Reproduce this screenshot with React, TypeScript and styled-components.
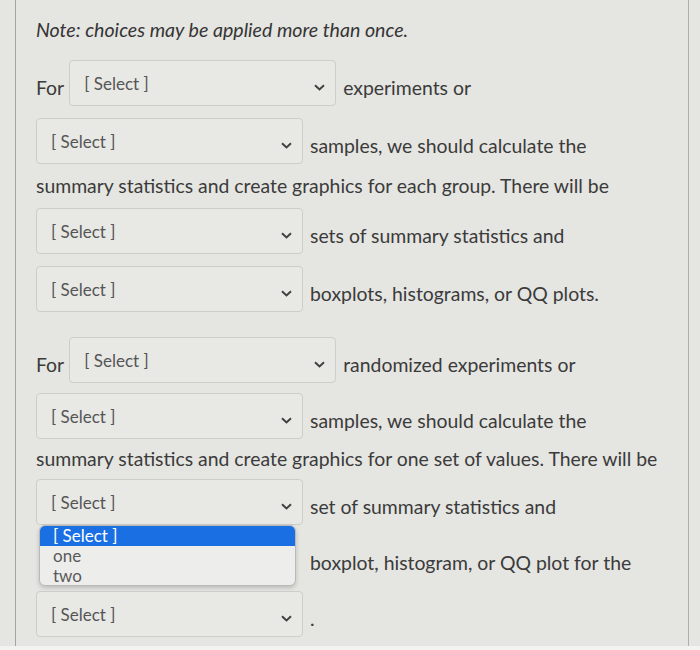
import React from "react";
import styled, {createGlobalStyle} from "styled-components";

const GlobalStyle = createGlobalStyle`
  html, body {
    margin: 0;
    padding: 0;
    background: #f3f3f1;
  }
  body {
    font-family: Lato, "Liberation Sans", sans-serif;
  }
`;

const Page = styled.div`
  width: 700px;
  height: 646px;
  box-sizing: border-box;
  padding: 0 11px 0 15px;
  background: #e5e5e2;
`;

const Panel = styled.div`
  height: 100%;
  box-sizing: border-box;
  padding: 19px 0 0 20px;
  border-left: 1px solid #a4a5a2;
  border-right: 1px solid #aeb0ad;
`;

const Note = styled.div`
  font-size: 19.6px;
  line-height: 22px;
  font-style: italic;
  color: #353535;
  margin-bottom: 19px;
`;

const Paragraph = styled.div<{$top?: number; $gap?: number}>`
  display: flex;
  flex-direction: column;
  gap: ${(p) => p.$gap || 12}px;
  margin-top: ${(p) => p.$top || 0}px;
`;

const Row = styled.div`
  display: flex;
  align-items: center;
  height: 46px;
`;

const Line = styled.div`
  font-size: 19.4px;
  line-height: 20px;
  color: #3b3b3b;
  white-space: nowrap;
`;

const Words = styled.span<{$before?: boolean}>`
  font-size: 19.4px;
  color: #3b3b3b;
  white-space: nowrap;
  padding-top: 9px;
  margin: ${(p) => (p.$before ? "0 5px 0 0" : "0 0 0 7px")};
`;

const SelectBox = styled.div`
  width: 267px;
  height: 46px;
  box-sizing: border-box;
  display: flex;
  align-items: center;
  justify-content: space-between;
  padding: 0 10px 0 14px;
  border: 1px solid #cdceca;
  border-radius: 4px;
  background: #e8e8e5;
  font-size: 17px;
  color: #555;
`;

const Chevron = styled.svg`
  margin-top: 8px;
  flex: none;
`;

const OptionList = styled.div`
  width: 257px;
  height: 61px;
  box-sizing: border-box;
  flex: none;
  margin: -6px 7px 0 3px;
  background: #ededeb;
  border: 1px solid #b9bab7;
  border-radius: 6px;
  box-shadow: 0 2px 4px rgba(0, 0, 0, 0.18);
  overflow: hidden;
`;

const Option = styled.div<{$active?: boolean}>`
  height: 20px;
  line-height: 20px;
  padding-left: 13px;
  font-size: 17px;
  color: ${(p) => (p.$active ? "#fff" : "#5a5a5a")};
  background: ${(p) => (p.$active ? "#1a6fe3" : "transparent")};
`;

const Select: React.FC = () => (
  <SelectBox>
    <span>[ Select ]</span>
    <Chevron width="11" height="7" viewBox="0 0 11 7">
      <path d="M1 1.2 L5.5 5.4 L10 1.2" fill="none" stroke="#404040" strokeWidth="2" />
    </Chevron>
  </SelectBox>
);

// the native popup of an open select, drawn over its own box
const OpenSelect: React.FC<{options: string[]}> = ({options}) => (
  <OptionList>
    {options.map((o, i) => (
      <Option key={o} $active={i === 0}>
        {o}
      </Option>
    ))}
  </OptionList>
);

const App: React.FC = () => (
  <>
    <GlobalStyle />
    <Page>
      <Panel>
        <Note>Note: choices may be applied more than once.</Note>
        <Paragraph>
          <Row>
            <Words $before>For</Words>
            <Select />
            <Words>experiments or</Words>
          </Row>
          <Row>
            <Select />
            <Words>samples, we should calculate the</Words>
          </Row>
          <Line>summary statistics and create graphics for each group. There will be</Line>
          <Row>
            <Select />
            <Words>sets of summary statistics and</Words>
          </Row>
          <Row>
            <Select />
            <Words>boxplots, histograms, or QQ plots.</Words>
          </Row>
        </Paragraph>
        <Paragraph $top={25} $gap={10}>
          <Row>
            <Words $before>For</Words>
            <Select />
            <Words>randomized experiments or</Words>
          </Row>
          <Row>
            <Select />
            <Words>samples, we should calculate the</Words>
          </Row>
          <Line>summary statistics and create graphics for one set of values. There will be</Line>
          <Row>
            <Select />
            <Words>set of summary statistics and</Words>
          </Row>
          <Row>
            <OpenSelect options={["[ Select ]", "one", "two"]} />
            <Words>boxplot, histogram, or QQ plot for the</Words>
          </Row>
          <Row>
            <Select />
            <Words>.</Words>
          </Row>
        </Paragraph>
      </Panel>
    </Page>
  </>
);

export default App;
